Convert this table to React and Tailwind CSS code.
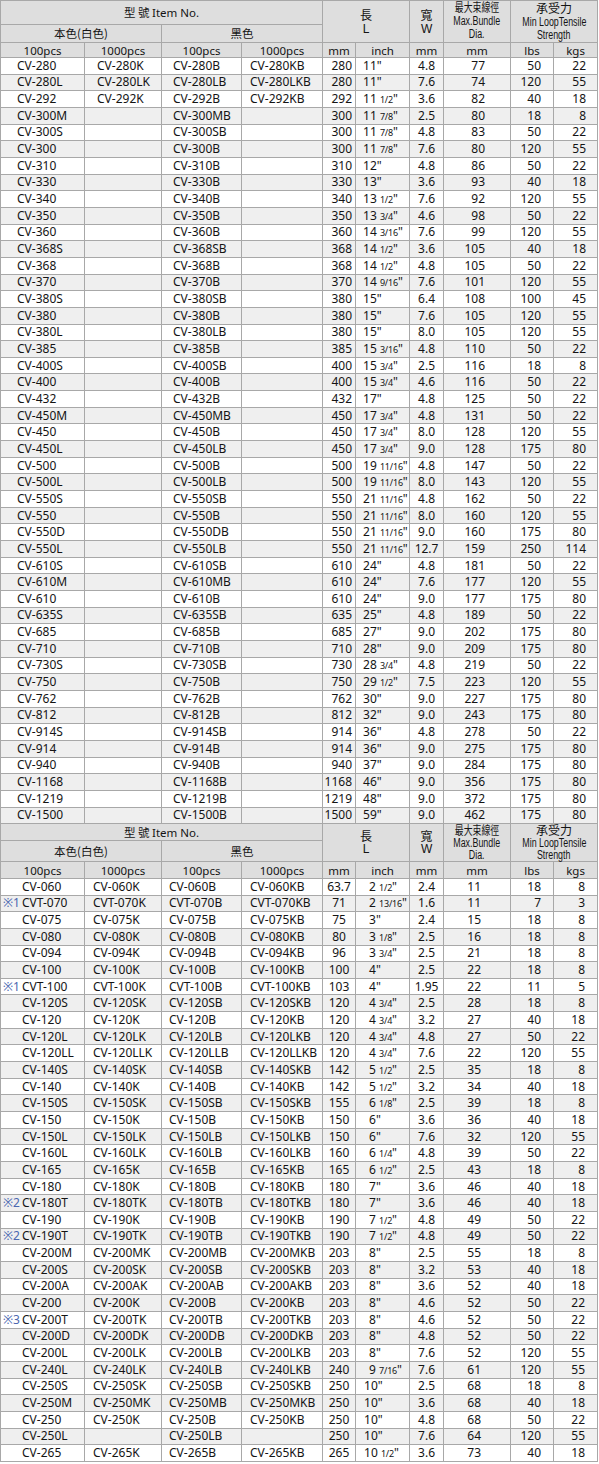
import React from "react";

const T1 = [
  ["CV-280","CV-280K","CV-280B","CV-280KB","280","11","4.8","77","50","22"],
  ["CV-280L","CV-280LK","CV-280LB","CV-280LKB","280","11","7.6","74","120","55"],
  ["CV-292","CV-292K","CV-292B","CV-292KB","292","11 1/2","3.6","82","40","18"],
  ["CV-300M","","CV-300MB","","300","11 7/8","2.5","80","18","8"],
  ["CV-300S","","CV-300SB","","300","11 7/8","4.8","83","50","22"],
  ["CV-300","","CV-300B","","300","11 7/8","7.6","80","120","55"],
  ["CV-310","","CV-310B","","310","12","4.8","86","50","22"],
  ["CV-330","","CV-330B","","330","13","3.6","93","40","18"],
  ["CV-340","","CV-340B","","340","13 1/2","7.6","92","120","55"],
  ["CV-350","","CV-350B","","350","13 3/4","4.6","98","50","22"],
  ["CV-360","","CV-360B","","360","14 3/16","7.6","99","120","55"],
  ["CV-368S","","CV-368SB","","368","14 1/2","3.6","105","40","18"],
  ["CV-368","","CV-368B","","368","14 1/2","4.8","105","50","22"],
  ["CV-370","","CV-370B","","370","14 9/16","7.6","101","120","55"],
  ["CV-380S","","CV-380SB","","380","15","6.4","108","100","45"],
  ["CV-380","","CV-380B","","380","15","7.6","105","120","55"],
  ["CV-380L","","CV-380LB","","380","15","8.0","105","120","55"],
  ["CV-385","","CV-385B","","385","15 3/16","4.8","110","50","22"],
  ["CV-400S","","CV-400SB","","400","15 3/4","2.5","116","18","8"],
  ["CV-400","","CV-400B","","400","15 3/4","4.6","116","50","22"],
  ["CV-432","","CV-432B","","432","17","4.8","125","50","22"],
  ["CV-450M","","CV-450MB","","450","17 3/4","4.8","131","50","22"],
  ["CV-450","","CV-450B","","450","17 3/4","8.0","128","120","55"],
  ["CV-450L","","CV-450LB","","450","17 3/4","9.0","128","175","80"],
  ["CV-500","","CV-500B","","500","19 11/16","4.8","147","50","22"],
  ["CV-500L","","CV-500LB","","500","19 11/16","8.0","143","120","55"],
  ["CV-550S","","CV-550SB","","550","21 11/16","4.8","162","50","22"],
  ["CV-550","","CV-550B","","550","21 11/16","8.0","160","120","55"],
  ["CV-550D","","CV-550DB","","550","21 11/16","9.0","160","175","80"],
  ["CV-550L","","CV-550LB","","550","21 11/16","12.7","159","250","114"],
  ["CV-610S","","CV-610SB","","610","24","4.8","181","50","22"],
  ["CV-610M","","CV-610MB","","610","24","7.6","177","120","55"],
  ["CV-610","","CV-610B","","610","24","9.0","177","175","80"],
  ["CV-635S","","CV-635SB","","635","25","4.8","189","50","22"],
  ["CV-685","","CV-685B","","685","27","9.0","202","175","80"],
  ["CV-710","","CV-710B","","710","28","9.0","209","175","80"],
  ["CV-730S","","CV-730SB","","730","28 3/4","4.8","219","50","22"],
  ["CV-750","","CV-750B","","750","29 1/2","7.5","223","120","55"],
  ["CV-762","","CV-762B","","762","30","9.0","227","175","80"],
  ["CV-812","","CV-812B","","812","32","9.0","243","175","80"],
  ["CV-914S","","CV-914SB","","914","36","4.8","278","50","22"],
  ["CV-914","","CV-914B","","914","36","9.0","275","175","80"],
  ["CV-940","","CV-940B","","940","37","9.0","284","175","80"],
  ["CV-1168","","CV-1168B","","1168","46","9.0","356","175","80"],
  ["CV-1219","","CV-1219B","","1219","48","9.0","372","175","80"],
  ["CV-1500","","CV-1500B","","1500","59","9.0","462","175","80"],
];

const full = (m, b, mm, inch, w, d, l, k) => [m, b, b + "K", b + "B", b + "KB", mm, inch, w, d, l, k];

const T2 = [
  full("", "CV-060", "63.7", "2 1/2", "2.4", "11", "18", "8"),
  full("※1", "CVT-070", "71", "2 13/16", "1.6", "11", "7", "3"),
  full("", "CV-075", "75", "3", "2.4", "15", "18", "8"),
  full("", "CV-080", "80", "3 1/8", "2.5", "16", "18", "8"),
  full("", "CV-094", "96", "3 3/4", "2.5", "21", "18", "8"),
  full("", "CV-100", "100", "4", "2.5", "22", "18", "8"),
  full("※1", "CVT-100", "103", "4", "1.95", "22", "11", "5"),
  full("", "CV-120S", "120", "4 3/4", "2.5", "28", "18", "8"),
  full("", "CV-120", "120", "4 3/4", "3.2", "27", "40", "18"),
  full("", "CV-120L", "120", "4 3/4", "4.8", "27", "50", "22"),
  full("", "CV-120LL", "120", "4 3/4", "7.6", "22", "120", "55"),
  full("", "CV-140S", "142", "5 1/2", "2.5", "35", "18", "8"),
  full("", "CV-140", "142", "5 1/2", "3.2", "34", "40", "18"),
  full("", "CV-150S", "155", "6 1/8", "2.5", "39", "18", "8"),
  full("", "CV-150", "150", "6", "3.6", "36", "40", "18"),
  full("", "CV-150L", "150", "6", "7.6", "32", "120", "55"),
  full("", "CV-160L", "160", "6 1/4", "4.8", "39", "50", "22"),
  full("", "CV-165", "165", "6 1/2", "2.5", "43", "18", "8"),
  full("", "CV-180", "180", "7", "3.6", "46", "40", "18"),
  full("※2", "CV-180T", "180", "7", "3.6", "46", "40", "18"),
  full("", "CV-190", "190", "7 1/2", "4.8", "49", "50", "22"),
  full("※2", "CV-190T", "190", "7 1/2", "4.8", "49", "50", "22"),
  full("", "CV-200M", "203", "8", "2.5", "55", "18", "8"),
  full("", "CV-200S", "203", "8", "3.2", "53", "40", "18"),
  full("", "CV-200A", "203", "8", "3.6", "52", "40", "18"),
  full("", "CV-200", "203", "8", "4.6", "52", "50", "22"),
  full("※3", "CV-200T", "203", "8", "4.6", "52", "50", "22"),
  full("", "CV-200D", "203", "8", "4.8", "52", "50", "22"),
  full("", "CV-200L", "203", "8", "7.6", "52", "120", "55"),
  full("", "CV-240L", "240", "9 7/16", "7.6", "61", "120", "55"),
  full("", "CV-250S", "250", "10", "2.5", "68", "18", "8"),
  full("", "CV-250M", "250", "10", "3.6", "68", "40", "18"),
  full("", "CV-250", "250", "10", "4.8", "68", "50", "22"),
  ["", "CV-250L", "", "CV-250LB", "", "250", "10", "7.6", "64", "120", "55"],
  full("", "CV-265", "265", "10 1/2", "3.6", "73", "40", "18"),
];

const B = "border border-[#a8a8a8] p-0 whitespace-nowrap overflow-hidden";
const H = "border border-[#a8a8a8] p-0 whitespace-nowrap bg-[#dedede] text-center";
const CJK = "font-['Noto_Sans_CJK_TC','Noto_Sans',sans-serif]";
const NARROW = "font-['Liberation_Sans','Noto_Sans_CJK_TC',sans-serif]";

function Inch({ v }) {
  const parts = v.split(" ");
  return (
    <>
      {parts[0]}
      {parts[1] ? (
        <>
          {" "}
          <span className="text-[9px] leading-[0] tracking-[-0.2px]">{parts[1]}</span>
        </>
      ) : null}
      "
    </>
  );
}

function Narrow({ children }) {
  return <span className="inline-block scale-x-[0.74] origin-center">{children}</span>;
}

function Header({ r1, r2, r3, lead }) {
  return (
    <>
      <tr className={r1}>
        <td colSpan={4} className={`${H} text-[11.5px] leading-[14px] ${CJK}`}>
          型 號 <span className="font-['Noto_Sans',sans-serif]">Item No.</span>
        </td>
        <td colSpan={2} rowSpan={2} className={`${H} text-[12px] ${lead} ${CJK}`}>
          長
          <br />
          <span className={NARROW}>L</span>
        </td>
        <td rowSpan={2} className={`${H} text-[12px] ${lead} ${CJK}`}>
          寬
          <br />
          <span className={NARROW}>W</span>
        </td>
        <td rowSpan={2} className={`${H} text-[12px] ${lead} ${NARROW}`}>
          <Narrow>最大束線徑</Narrow>
          <br />
          <Narrow>Max.Bundle</Narrow>
          <br />
          <Narrow>Dia.</Narrow>
        </td>
        <td colSpan={2} rowSpan={2} className={`${H} text-[12px] ${lead} ${NARROW}`}>
          <span className={`text-[12px] ${CJK}`}>承受力</span>
          <br />
          <Narrow>Min LoopTensile</Narrow>
          <br />
          <Narrow>Strength</Narrow>
        </td>
      </tr>
      <tr className={r2}>
        <td colSpan={2} className={`${H} text-[11.5px] leading-[14px] ${CJK}`}>本色(白色)</td>
        <td colSpan={2} className={`${H} text-[11.5px] leading-[14px] ${CJK}`}>黑色</td>
      </tr>
      <tr className={`${r3} text-[11.5px] leading-[13px]`}>
        {["100pcs", "1000pcs", "100pcs", "1000pcs", "mm", "inch", "mm", "mm", "lbs", "kgs"].map((t, i) => (
          <td key={i} className={H}>
            {t}
          </td>
        ))}
      </tr>
    </>
  );
}

export default function App() {
  return (
    <div className="w-[599px] bg-white text-[#141414] font-['Noto_Sans','Noto_Sans_CJK_TC',sans-serif]">
      <table className="table-fixed border-collapse w-[597px] text-[12px] leading-[14px]">
        <colgroup>
          <col className="w-[84px]" />
          <col className="w-[77px]" />
          <col className="w-[80px]" />
          <col className="w-[81px]" />
          <col className="w-[33px]" />
          <col className="w-[54px]" />
          <col className="w-[34px]" />
          <col className="w-[67px]" />
          <col className="w-[43px]" />
          <col className="w-[44px]" />
        </colgroup>
        <tbody>
          <Header r1="h-[22px]" r2="h-[17.3px]" r3="h-[15px]" lead="leading-[13px]" />
          {T1.map((r, i) => (
            <tr key={"a" + i} className={`h-[16.66px] ${i % 2 ? "bg-[#efefef]" : "bg-white"}`}>
              <td className={`${B} pl-[16px]`}>{r[0]}</td>
              <td className={`${B} pl-[12px]`}>{r[1]}</td>
              <td className={`${B} pl-[11px]`}>{r[2]}</td>
              <td className={`${B} pl-[8px]`}>{r[3]}</td>
              <td className={`${B} text-right pr-[3px]`}>{r[4]}</td>
              <td className={`${B} pl-[7px]`}>
                <Inch v={r[5]} />
              </td>
              <td className={`${B} text-center`}>{r[6]}</td>
              <td className={`${B} text-right pr-[25px]`}>{r[7]}</td>
              <td className={`${B} text-right pr-[12px]`}>{r[8]}</td>
              <td className={`${B} text-right pr-[11px]`}>{r[9]}</td>
            </tr>
          ))}
          <Header r1="h-[16.6px]" r2="h-[20.7px]" r3="h-[16.7px]" lead="leading-[12px]" />
          {T2.map((r, i) => (
            <tr key={"b" + i} className={`h-[16.66px] ${i % 2 ? "bg-[#efefef]" : "bg-white"}`}>
              <td className={`${B} pl-[2px]`}>
                <span className="inline-block w-[19px] text-[#4b67b0]">{r[0]}</span>
                {r[1]}
              </td>
              <td className={`${B} pl-[8px]`}>{r[2]}</td>
              <td className={`${B} pl-[7px]`}>{r[3]}</td>
              <td className={`${B} pl-[8px]`}>{r[4]}</td>
              <td className={`${B} text-center`}>{r[5]}</td>
              <td className={`${B} ${r[6].length > 2 && r[6].indexOf(" ") === 2 || r[6] === "10" ? "pl-[8px]" : "pl-[13px]"}`}>
                <Inch v={r[6]} />
              </td>
              <td className={`${B} text-center`}>{r[7]}</td>
              <td className={`${B} text-right pr-[29px]`}>{r[8]}</td>
              <td className={`${B} text-right pr-[12px]`}>{r[9]}</td>
              <td className={`${B} text-right pr-[12px]`}>{r[10]}</td>
            </tr>
          ))}
        </tbody>
      </table>
    </div>
  );
}
